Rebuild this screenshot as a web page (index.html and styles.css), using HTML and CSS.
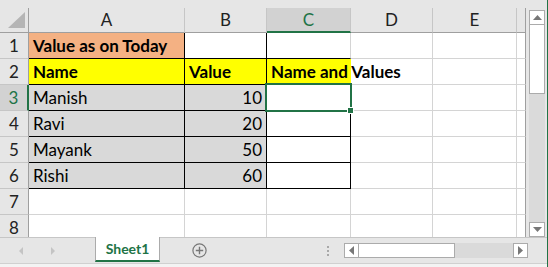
FILE: index.html
```html
<!DOCTYPE html>
<html lang="en">
<head>
  <meta charset="UTF-8" />
  <title>Book1 - Sheet1</title>
  <link rel="stylesheet" href="styles.css">
</head>
<body>
  <div class="app">
    <div class="main">
      <div class="sheet">
        <div class="strip"></div>
        <div class="grid">
          <!-- header row -->
          <div class="cell corner"><svg width="18" height="17" viewBox="0 0 18 17"><polygon points="17,0 17,16 0,16" fill="#b5b5b5"/></svg></div>
          <div class="cell ch">A</div>
          <div class="cell ch">B</div>
          <div class="cell ch sel-col">C</div>
          <div class="cell ch">D</div>
          <div class="cell ch">E</div>
          <div class="cell ch last"></div>

          <!-- row 1 -->
          <div class="cell rh">1</div>
          <div class="cell b bold salmon">Value as on Today</div>
          <div class="cell b"></div>
          <div class="cell b no-right"></div>
          <div class="cell"></div>
          <div class="cell"></div>
          <div class="cell edge"></div>

          <!-- row 2 -->
          <div class="cell rh">2</div>
          <div class="cell b bold yellow">Name</div>
          <div class="cell b bold yellow">Value</div>
          <div class="cell b bold yellow spill">Name and Values</div>
          <div class="cell"></div>
          <div class="cell"></div>
          <div class="cell edge"></div>

          <!-- row 3 -->
          <div class="cell rh sel-row">3</div>
          <div class="cell b grey">Manish</div>
          <div class="cell b grey num">10</div>
          <div class="cell b active"><span class="sel-box"><span class="handle"></span></span></div>
          <div class="cell"></div>
          <div class="cell"></div>
          <div class="cell edge"></div>

          <!-- row 4 -->
          <div class="cell rh">4</div>
          <div class="cell b grey">Ravi</div>
          <div class="cell b grey num">20</div>
          <div class="cell b"></div>
          <div class="cell"></div>
          <div class="cell"></div>
          <div class="cell edge"></div>

          <!-- row 5 -->
          <div class="cell rh">5</div>
          <div class="cell b grey">Mayank</div>
          <div class="cell b grey num">50</div>
          <div class="cell b"></div>
          <div class="cell"></div>
          <div class="cell"></div>
          <div class="cell edge"></div>

          <!-- row 6 -->
          <div class="cell rh">6</div>
          <div class="cell b grey">Rishi</div>
          <div class="cell b grey num">60</div>
          <div class="cell b"></div>
          <div class="cell"></div>
          <div class="cell"></div>
          <div class="cell edge"></div>

          <!-- row 7 -->
          <div class="cell rh">7</div>
          <div class="cell"></div>
          <div class="cell"></div>
          <div class="cell"></div>
          <div class="cell"></div>
          <div class="cell"></div>
          <div class="cell edge"></div>

          <!-- row 8 (cut off) -->
          <div class="cell rh cut">8</div>
          <div class="cell cut"></div>
          <div class="cell cut"></div>
          <div class="cell cut"></div>
          <div class="cell cut"></div>
          <div class="cell cut"></div>
          <div class="cell edge cut"></div>
        </div>
      </div>

      <div class="vscroll">
        <div class="sbtn"><svg width="9" height="5" viewBox="0 0 9 5"><polygon points="4.5,0 9,5 0,5" fill="#777"/></svg></div>
        <div class="vthumb"></div>
        <div class="vtrack"></div>
        <div class="sbtn"><svg width="9" height="5" viewBox="0 0 9 5"><polygon points="0,0 9,0 4.5,5" fill="#777"/></svg></div>
      </div>
    </div>

    <div class="tabbar">
      <svg class="nav first" width="4" height="8" viewBox="0 0 4 8"><polygon points="4,0 4,8 0,4" fill="#c4c4c4"/></svg>
      <svg class="nav" width="4" height="8" viewBox="0 0 4 8"><polygon points="0,0 4,4 0,8" fill="#c4c4c4"/></svg>
      <div class="tab">Sheet1</div>
      <svg class="add" width="15" height="15" viewBox="0 0 15 15">
        <circle cx="7.5" cy="7.5" r="6.6" fill="none" stroke="#777" stroke-width="1.2"/>
        <path d="M7.5 3.8v7.4M3.8 7.5h7.4" stroke="#777" stroke-width="1.4"/>
      </svg>
      <svg class="dots" width="2" height="10" viewBox="0 0 2 10">
        <rect x="0" y="0" width="2" height="2" fill="#a8a8a8"/>
        <rect x="0" y="4" width="2" height="2" fill="#a8a8a8"/>
        <rect x="0" y="8" width="2" height="2" fill="#a8a8a8"/>
      </svg>
      <div class="hscroll">
        <div class="hbtn"><svg width="5" height="9" viewBox="0 0 5 9"><polygon points="5,0 5,9 0,4.5" fill="#777"/></svg></div>
        <div class="hthumb"></div>
        <div class="htrack"></div>
        <div class="hbtn"><svg width="5" height="9" viewBox="0 0 5 9"><polygon points="0,0 5,4.5 0,9" fill="#777"/></svg></div>
      </div>
    </div>
    <div class="status"></div>
  </div>
</body>
</html>
```

FILE: styles.css
```css
body {
  margin: 0;
  font-family: Lato, "Open Sans", sans-serif;
  background: #e6e6e6;
}
.app {
  width: 547px;
  height: 267px;
  border-right: 1px solid #217346;
  display: flex;
  flex-direction: column;
  overflow: hidden;
}
.main {
  display: flex;
  height: 237px;
}
.sheet {
  width: 526px;
  display: flex;
  flex-direction: column;
}
.strip {
  height: 8px;
  background: #e6e6e6;
}
.grid {
  display: grid;
  grid-template-columns: 29px 156px 82px 84px 82px 84px 9px;
  grid-template-rows: 25px repeat(7, 26px) 22px;
  background: #ffffff;
}
.cell {
  box-sizing: border-box;
  border-right: 1px solid #d4d4d4;
  border-bottom: 1px solid #d4d4d4;
  padding: 0 4px;
  font-size: 17px;
  line-height: 25px;
  white-space: nowrap;
  color: #000;
  position: relative;
}
.ch {
  background: #e6e6e6;
  border-right-color: #c6c6c6;
  border-bottom-color: #9f9f9f;
  text-align: center;
  color: #222;
  line-height: 24px;
}
.ch.last {
  border-right-color: #9f9f9f;
}
.corner {
  background: #e6e6e6;
  border-right-color: #9f9f9f;
  border-bottom-color: #9f9f9f;
  padding: 4px 0 0 8px;
}
.corner svg {
  display: block;
}
.sel-col {
  background: #d2d2d2;
  color: #217346;
  border-bottom: 2px solid #217346;
}
.rh {
  background: #e6e6e6;
  border-right-color: #9f9f9f;
  border-bottom-color: #c6c6c6;
  text-align: center;
  padding: 0;
  color: #222;
}
.sel-row {
  background: #d2d2d2;
  color: #217346;
  border-right: 2px solid #217346;
}
.edge {
  border-right-color: #9f9f9f;
}
.cut {
  border-bottom: none;
}
.b {
  border-right-color: #000;
  border-bottom-color: #000;
}
.no-right {
  border-right-color: #d4d4d4;
}
.bold {
  font-weight: bold;
}
.salmon {
  background: #f4b183;
}
.yellow {
  background: #ffff00;
}
.grey {
  background: #d9d9d9;
}
.num {
  text-align: right;
}
.spill {
  overflow: visible;
  border-right-color: #ffff00;
  z-index: 1;
}
.active {
  z-index: 2;
}
.sel-box {
  position: absolute;
  top: -2px;
  left: -2px;
  right: -2px;
  bottom: -2px;
  border: 2px solid #217346;
}
.handle {
  position: absolute;
  right: -4px;
  bottom: -4px;
  width: 5px;
  height: 5px;
  background: #217346;
  border: 1px solid #fff;
}

/* vertical scrollbar */
.vscroll {
  width: 21px;
  box-sizing: border-box;
  padding: 10px 2px 0 3px;
  display: flex;
  flex-direction: column;
}
.sbtn {
  height: 15px;
  box-sizing: border-box;
  border: 1px solid #ababab;
  background: #fff;
  display: flex;
  align-items: center;
  justify-content: center;
}
.vthumb {
  height: 69px;
  box-sizing: border-box;
  border: 1px solid #ababab;
  border-top: none;
  background: #fff;
}
.vtrack {
  flex: 1;
  background: #dadada;
}

/* sheet tabs */
.tabbar {
  height: 27px;
  box-sizing: border-box;
  border-top: 1px solid #c6c6c6;
  border-bottom: 1px solid #d0d0d0;
  display: flex;
  align-items: center;
}
.nav {
  margin-left: 28px;
}
.nav.first {
  margin-left: 19px;
}
.tab {
  align-self: flex-start;
  margin-top: -1px;
  margin-left: 40px;
  width: 65px;
  height: 25px;
  box-sizing: border-box;
  background: #fff;
  border-left: 1px solid #ababab;
  border-right: 1px solid #ababab;
  border-bottom: 2px solid #217346;
  color: #217346;
  font-weight: bold;
  font-size: 14px;
  line-height: 23px;
  text-align: center;
}
.add {
  margin-left: 32px;
}
.dots {
  margin-left: 120px;
}
.hscroll {
  margin-left: 15px;
  width: 184px;
  height: 15px;
  display: flex;
}
.hbtn {
  width: 15px;
  box-sizing: border-box;
  border: 1px solid #ababab;
  background: #fff;
  display: flex;
  align-items: center;
  justify-content: center;
}
.hthumb {
  width: 96px;
  box-sizing: border-box;
  border: 1px solid #ababab;
  border-left: none;
  background: #fff;
}
.htrack {
  flex: 1;
  background: #dadada;
}
.status {
  flex: 1;
  background: #f3f3f3;
}
```
